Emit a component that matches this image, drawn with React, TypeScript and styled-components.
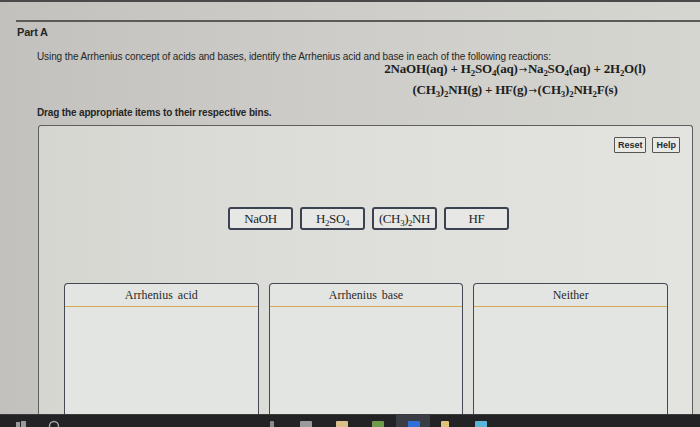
import React from 'react';
import styled, { createGlobalStyle } from 'styled-components';

const GlobalStyle = createGlobalStyle`
  html, body {
    margin: 0;
    padding: 0;
    background: #c4c3bf;
  }
`;

const Screen = styled.div`
  width: 700px;
  height: 427px;
  display: flex;
  flex-direction: column;
  overflow: hidden;
  background: linear-gradient(90deg, #c2c1bd 0%, #cdccc8 45%, #d6d6d1 100%);
  color: #262626;
  font-family: 'Liberation Sans', Arial, sans-serif;
`;

const TopEdge = styled.div`
  height: 2px;
  background: #4a4a4a;
  flex-shrink: 0;
`;

const Page = styled.div`
  flex: 1;
  min-height: 0;
  display: flex;
  flex-direction: column;
  padding-left: 16px;
`;

const Rule = styled.div`
  margin-top: 18px;
  height: 2px;
  background: #5a5a5a;
  flex-shrink: 0;
`;

const PartTitle = styled.h3`
  margin: 4px 0 0 1px;
  font-size: 11px;
  font-weight: 700;
  letter-spacing: -0.2px;
  line-height: 13px;
`;

const Body = styled.div`
  flex: 1;
  min-height: 0;
  display: flex;
  flex-direction: column;
  padding-left: 21px;
`;

const Prompt = styled.p`
  margin: 12px 0 0;
  font-size: 10px;
  line-height: 12px;
  letter-spacing: -0.1px;
`;

const Equations = styled.div`
  width: 300px;
  margin: 0 0 0 328px;
  display: flex;
  flex-direction: column;
  align-items: center;
  gap: 8px;
  font-family: 'Liberation Serif', 'Times New Roman', serif;
  font-weight: 700;
  font-size: 13px;
  line-height: 12px;
  letter-spacing: -0.2px;
  color: #1e1e1e;
`;

const Arrow = styled.span`
  font-family: 'DejaVu Sans', sans-serif;
  font-weight: 400;
  font-size: 10px;
  margin: 0 1px;
`;

const Instruction = styled.p`
  margin: 10px 0 0;
  font-size: 10px;
  font-weight: 700;
  line-height: 12px;
  letter-spacing: -0.15px;
`;

const Panel = styled.div`
  flex: 1;
  min-height: 0;
  margin: 6px 7px 0 1px;
  display: flex;
  flex-direction: column;
  border: 1px solid #5e5e5e;
  border-bottom: none;
  border-radius: 3px 3px 0 0;
  background: linear-gradient(90deg, #d6d6d1 0%, #dfe0dc 55%, #e3e4e0 100%);
`;

const Toolbar = styled.div`
  display: flex;
  justify-content: flex-end;
  gap: 6px;
  padding: 11px 12px 0 0;
`;

const ToolButton = styled.button`
  height: 16px;
  padding: 0 3px;
  border: 1px solid #555;
  border-radius: 1px;
  background: #e9e9e6;
  font-family: 'Liberation Sans', Arial, sans-serif;
  font-size: 9px;
  font-weight: 700;
  color: #2b2b2b;
  line-height: 14px;
`;

const ItemRow = styled.div`
  display: flex;
  justify-content: center;
  gap: 7px;
  margin-top: 54px;
  padding-left: 6px;
`;

const Item = styled.div`
  width: 65px;
  height: 23px;
  box-sizing: border-box;
  display: flex;
  align-items: center;
  justify-content: center;
  border: 2px solid #3b4250;
  border-radius: 3px;
  background: #e7e8e5;
  font-family: 'Liberation Serif', 'Times New Roman', serif;
  font-size: 13px;
  color: #1f1f1f;
  letter-spacing: -0.4px;
`;

const ItemLabel = styled.span`
  line-height: 14px;
`;

const Sub = styled.sub`
  font-size: 0.68em;
  line-height: 0;
  vertical-align: -0.3em;
`;

const Bins = styled.div`
  flex: 1;
  min-height: 0;
  display: grid;
  grid-template-columns: repeat(3, 1fr);
  gap: 10px;
  margin-top: 53px;
  padding: 0 24px 0 25px;
`;

const Bin = styled.div`
  display: flex;
  flex-direction: column;
  border: 1.5px solid #454a52;
  border-bottom: none;
  border-radius: 4px 4px 0 0;
  background: #e3e5e2;
`;

const BinTitle = styled.div`
  height: 22px;
  display: flex;
  align-items: center;
  justify-content: center;
  border-bottom: 1.5px solid #d8a857;
  font-family: 'Liberation Serif', 'Times New Roman', serif;
  font-size: 12px;
  color: #2a2a2a;
  word-spacing: 2px;
`;

const Taskbar = styled.div`
  height: 12px;
  flex-shrink: 0;
  background: #232325;
  border-top: 1px solid #3a3a3a;
`;

const TaskbarIcons = styled.div`
  position: relative;
  width: 100%;
  height: 100%;
`;

const TrayIcon = styled.div<{ $at: number; $color: string; $w?: number }>`
  position: absolute;
  left: ${({ $at }) => $at}px;
  bottom: 0;
  width: ${({ $w }) => $w ?? 10}px;
  height: 6px;
  background: ${({ $color }) => $color};
  border-radius: 1px 1px 0 0;
`;

const ActiveSlot = styled.div`
  position: absolute;
  left: 396px;
  top: 0;
  width: 34px;
  height: 100%;
  background: #3b3d44;
`;

const bins = ['Arrhenius  acid', 'Arrhenius  base', 'Neither'];

const Windows = () => (
  <svg width="10" height="7" viewBox="0 0 10 7" style={{ position: 'absolute', left: 16, bottom: 0 }}>
    <rect x="0" y="2" width="4" height="5" fill="#9a9a9a" />
    <rect x="5" y="1" width="5" height="6" fill="#9a9a9a" />
  </svg>
);

const Search = () => (
  <svg width="12" height="8" viewBox="0 0 12 8" style={{ position: 'absolute', left: 48, bottom: 0 }}>
    <circle cx="6" cy="7" r="4.5" fill="none" stroke="#a8a8a8" strokeWidth="1.4" />
  </svg>
);

export default function App() {
  return (
    <>
      <GlobalStyle />
      <Screen>
        <TopEdge />
        <Page>
          <Rule />
          <PartTitle>Part A</PartTitle>
          <Body>
            <Prompt>
              Using the Arrhenius concept of acids and bases, identify the Arrhenius acid and base in each of the
              following reactions:
            </Prompt>
            <Equations>
              <span>
                2NaOH(aq) + H<Sub>2</Sub>SO<Sub>4</Sub>(aq)<Arrow>→</Arrow>Na<Sub>2</Sub>SO<Sub>4</Sub>(aq) + 2H
                <Sub>2</Sub>O(l)
              </span>
              <span>
                (CH<Sub>3</Sub>)<Sub>2</Sub>NH(g) + HF(g)<Arrow>→</Arrow>(CH<Sub>3</Sub>)<Sub>2</Sub>NH<Sub>2</Sub>F(s)
              </span>
            </Equations>
            <Instruction>Drag the appropriate items to their respective bins.</Instruction>
            <Panel>
              <Toolbar>
                <ToolButton>Reset</ToolButton>
                <ToolButton>Help</ToolButton>
              </Toolbar>
              <ItemRow>
                <Item>
                  <ItemLabel>NaOH</ItemLabel>
                </Item>
                <Item>
                  <ItemLabel>
                    H<Sub>2</Sub>SO<Sub>4</Sub>
                  </ItemLabel>
                </Item>
                <Item>
                  <ItemLabel>
                    (CH<Sub>3</Sub>)<Sub>2</Sub>NH
                  </ItemLabel>
                </Item>
                <Item>
                  <ItemLabel>HF</ItemLabel>
                </Item>
              </ItemRow>
              <Bins>
                {bins.map((name) => (
                  <Bin key={name}>
                    <BinTitle>{name}</BinTitle>
                  </Bin>
                ))}
              </Bins>
            </Panel>
          </Body>
        </Page>
        <Taskbar>
          <TaskbarIcons>
            <Windows />
            <Search />
            <TrayIcon $at={270} $color="#8b8b8b" $w={4} />
            <TrayIcon $at={300} $color="#9a9a9a" $w={12} />
            <TrayIcon $at={336} $color="#d9c08a" $w={12} />
            <ActiveSlot />
            <TrayIcon $at={372} $color="#6e9b4a" $w={12} />
            <TrayIcon $at={408} $color="#2f6fd6" $w={12} />
            <TrayIcon $at={441} $color="#e0c27a" $w={8} />
            <TrayIcon $at={475} $color="#59b6d8" $w={12} />
          </TaskbarIcons>
        </Taskbar>
      </Screen>
    </>
  );
}
